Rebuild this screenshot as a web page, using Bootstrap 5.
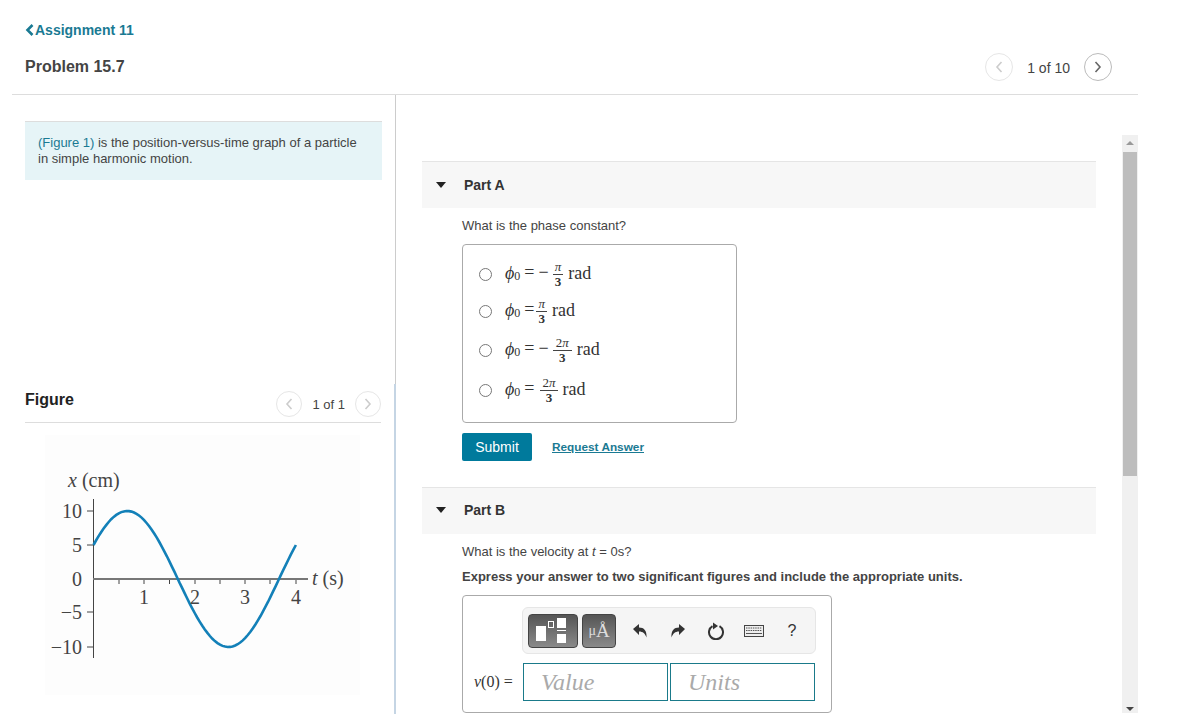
<!DOCTYPE html>
<html lang="en">
<head>
    <meta charset="UTF-8">
    <title>Problem 15.7</title>
    <link rel="stylesheet" href="https://cdn.jsdelivr.net/npm/bootstrap@5.3.0/dist/css/bootstrap.min.css">
    <style>
        html, body { height: 714px; overflow: hidden; }
        body { font-family: "Liberation Sans", Arial, sans-serif; font-size: 13px; color: #444; background: #fff; line-height: 16px; }
        a { color: #1a7a93; }
        .page-wrap { width: 1126px; margin-left: 12px; }
        .top-head { height: 95px; border-bottom: 1px solid #ddd; padding: 22px 26px 0 13px; }
        .back-link { font-size: 14px; font-weight: 700; text-decoration: none; height: 16px; }
        .prob-title { font-size: 16px; font-weight: 700; color: #444; margin: 0; }
        .head-row { margin-top: 15px; }
        .circ-btn { width: 28px; height: 28px; border-radius: 50%; border: 1px solid #bbb; background: #fff; padding: 0; display: flex; align-items: center; justify-content: center; }
        .circ-btn.is-off { border-color: #e6e6e6; }
        .count-txt { font-size: 14px; margin: 1px 14px 0; }
        .main-row { height: 619px; }
        .left-col { width: 384px; flex: none; }
        .intro-part { height: 289px; padding: 26px 13px 0; border-right: 1px solid #ccc; }
        .intro-box { height: 59px; background: #e6f4f7; border-top: 1px solid #ddd; padding: 13px 16px 13px 13px; font-size: 13px; }
        .intro-box a { text-decoration: none; }
        .fig-part { height: 330px; padding: 0 13px; border-right: 2px solid #c5d5e4; }
        .fig-head { height: 39px; border-bottom: 1px solid #ddd; padding-top: 4px; }
        .fig-title { font-size: 16px; font-weight: 700; color: #222; margin: 0 0 10px; }
        .fig-nav { margin-bottom: 2px; }
        .fig-nav .circ-btn { width: 26px; height: 26px; }
        .fig-nav .count-txt { font-size: 13px; margin: 2px 10px 0; }
        .fig-graph { display: block; margin: 12px 0 0 20px; background: #fdfdfd; }
        .right-col { width: 742px; flex: none; padding-left: 26px; }
        .parts-col { width: 674px; flex: none; padding-top: 66px; }
        .part-bar { height: 47px; background: #f7f7f7; border-top: 1px solid #e5e5e5; padding-left: 14px; gap: 18px; font-size: 14px; font-weight: 700; color: #333; }
        .part-gap { margin-top: 26px; padding-bottom: 2px; }
        .part-arrow { width: 0; height: 0; border-left: 5.5px solid transparent; border-right: 5.5px solid transparent; border-top: 6px solid #222; }
        .part-body { padding-left: 40px; }
        .q-line { margin-top: 10px; }
        .hint-line { margin-top: 9px; }
        .opt-box { width: 275px; height: 179px; border: 1px solid #aaa; border-radius: 4px; padding: 10px 16px; margin-top: 10px; }
        .opt-row { height: 38px; gap: 13px; }
        .opt-row:nth-child(2) { height: 36px; }
        .opt-row:nth-child(3) { height: 42px; }
        .opt-row .form-check-input { width: 13px; height: 13px; margin: 0; border: 1px solid #777; flex: none; }
        .math-txt { font-family: "Liberation Serif", serif; font-size: 18px; color: #333; white-space: nowrap; }
        .math-txt sub { font-size: 12px; bottom: -.15em; }
        .math-txt .op { margin: 0 4px; }
        .math-txt .op.op-tight { margin-right: 0; }
        .math-txt .op-minus { margin-right: 2px; }
        .frac-box { display: inline-flex; flex-direction: column; text-align: center; vertical-align: middle; font-size: 13px; line-height: 12px; margin: 0 5px 0 2px; }
        .frac-box > span:first-child { border-bottom: 1px solid #444; padding: 0 2px 1px; }
        .frac-box > span:last-child { font-weight: 700; padding-top: 1px; }
        .frac-box.frac-wide > span:first-child { padding: 0 3px 1px; }
        .act-row { margin-top: 10px; }
        .submit-btn { width: 70px; height: 28px; background: #007a9c; border: 0; border-radius: 2px; color: #fff; font-size: 14px; padding: 0; }
        .req-link { font-size: 11.8px; font-weight: 700; margin-left: 20px; }
        .ans-box { width: 370px; height: 118px; border: 1px solid #aaa; border-radius: 4px; margin-top: 10px; padding: 11px 16px 0 11px; }
        .tool-bar { width: 294px; height: 47px; margin-left: 48px; background: #f5f5f5; border: 1px solid #e6e6e6; border-radius: 6px; padding: 5px; }
        .tool-dark { height: 34px; border: 1px solid #444; border-radius: 4px; background: linear-gradient(#555, #8a8a8a); color: #ddd; padding: 0; display: flex; align-items: center; justify-content: center; font-family: "Liberation Serif", serif; font-size: 14px; flex: none; }
        .tool-dark.tool-tpl { width: 50px; }
        .tool-dark.tool-unit { width: 34px; margin-left: 4px; }
        .tool-dark b { font-weight: 400; font-size: 19px; }
        .tool-ico { width: 38px; height: 34px; display: flex; align-items: center; justify-content: center; font-size: 16px; color: #333; flex: none; }
        .tool-first { margin-left: 5px; }
        .ans-row { margin-top: 9px; }
        .ans-label { width: 49px; font-family: "Liberation Serif", serif; font-size: 16px; color: #333; flex: none; }
        .ans-input { width: 145px; height: 38px; border: 1px solid #1a7a8a; border-radius: 0; padding: 0 17px; font-family: "Liberation Serif", serif; font-style: italic; font-size: 24px; flex: none; }
        .ans-input::placeholder { color: #aaa; opacity: 1; }
        .scroll-rail { width: 16px; height: 578px; margin: 40px 0 0 26px; background: #f0f0f0; flex: none; position: relative; }
        .scroll-thumb { width: 14px; height: 324px; margin-left: 1px; background: #bdbdbd; position: relative; top: 17px; }
        .rail-up, .rail-down { position: absolute; left: 4px; width: 0; height: 0; border-left: 4px solid transparent; border-right: 4px solid transparent; }
        .rail-up { top: 6px; border-bottom: 4px solid #999; }
        .rail-down { bottom: 2px; border-top: 4px solid #444; }
    </style>
</head>
<body>
    <div class="page-wrap">
        <div class="top-head">
            <a href="#" class="back-link d-flex align-items-center">
                <svg width="10" height="12" viewBox="0 0 10 12"><path d="M7.500 1 2.500 6l5 5" fill="none" stroke="#1a7a93" stroke-width="2.600"/></svg>Assignment 11
            </a>
            <div class="head-row d-flex justify-content-between align-items-center">
                <h1 class="prob-title">Problem 15.7</h1>
                <div class="d-flex align-items-center">
                    <button class="circ-btn is-off"><svg width="10" height="14" viewBox="0 0 10 14"><path d="M7.500 2 3 7l4.500 5" fill="none" stroke="#ccc" stroke-width="1.600"/></svg></button>
                    <span class="count-txt">1 of 10</span>
                    <button class="circ-btn"><svg width="10" height="14" viewBox="0 0 10 14"><path d="M2.500 2 7 7l-4.500 5" fill="none" stroke="#666" stroke-width="1.600"/></svg></button>
                </div>
            </div>
        </div>
        <div class="main-row d-flex">
            <div class="left-col">
                <div class="intro-part">
                    <div class="intro-box"><a href="#">(Figure 1)</a> is the position-versus-time graph of a particle in simple harmonic motion.</div>
                </div>
                <div class="fig-part">
                    <div class="fig-head d-flex justify-content-between align-items-center">
                        <h2 class="fig-title">Figure</h2>
                        <div class="fig-nav d-flex align-items-center">
                            <button class="circ-btn is-off"><svg width="10" height="14" viewBox="0 0 10 14"><path d="M7.500 2 3 7l4.500 5" fill="none" stroke="#ccc" stroke-width="1.600"/></svg></button>
                            <span class="count-txt">1 of 1</span>
                            <button class="circ-btn is-off"><svg width="10" height="14" viewBox="0 0 10 14"><path d="M2.500 2 7 7l-4.500 5" fill="none" stroke="#ccc" stroke-width="1.600"/></svg></button>
                        </div>
                    </div>
                    <svg class="fig-graph" width="315" height="260" viewBox="45 435 315 260" font-family="Liberation Serif, serif" font-size="20" fill="#444">
                        <g stroke="#444" stroke-width="1" fill="none">
                            <path d="M93.500 499V658"/>
                            <path d="M87 511h6M87 545h6M87 612h6M87 647h6"/>
                            <path d="M119 579v5M144 579v5M169.500 579v5M195 579v5M220 579v5M245 579v5M270 579v5M296 579v5"/>
                        </g>
                        <path d="M93 579H308" stroke="#777" stroke-width="2"/>
                        <path id="curve" fill="none" stroke="#1380b8" stroke-width="2.600"/>
                        <text x="68" y="487"><tspan font-style="italic">x</tspan> (cm)</text>
                        <g text-anchor="end">
                            <text x="82" y="518">10</text>
                            <text x="82" y="552">5</text>
                            <text x="82" y="586">0</text>
                            <text x="82" y="619">−5</text>
                            <text x="82" y="654">−10</text>
                        </g>
                        <g text-anchor="middle">
                            <text x="144" y="604">1</text>
                            <text x="195" y="604">2</text>
                            <text x="245" y="604">3</text>
                            <text x="296" y="604">4</text>
                        </g>
                        <text x="312" y="585"><tspan font-style="italic">t</tspan> (s)</text>
                    </svg>
                </div>
            </div>
            <div class="right-col d-flex">
                <div class="parts-col">
                    <div class="part-bar d-flex align-items-center"><span class="part-arrow"></span>Part A</div>
                    <div class="part-body">
                        <div class="q-line">What is the phase constant?</div>
                        <div class="opt-box">
                            <label class="opt-row d-flex align-items-center">
                                <input class="form-check-input" type="radio" name="phase">
                                <span class="math-txt"><i>ϕ</i><sub>0</sub><span class="op">=</span><span class="op-minus">−</span><span class="frac-box"><span><i>π</i></span><span>3</span></span>rad</span>
                            </label>
                            <label class="opt-row d-flex align-items-center">
                                <input class="form-check-input" type="radio" name="phase">
                                <span class="math-txt"><i>ϕ</i><sub>0</sub><span class="op op-tight">=</span><span class="frac-box"><span><i>π</i></span><span>3</span></span>rad</span>
                            </label>
                            <label class="opt-row d-flex align-items-center">
                                <input class="form-check-input" type="radio" name="phase">
                                <span class="math-txt"><i>ϕ</i><sub>0</sub><span class="op">=</span><span class="op-minus">−</span><span class="frac-box frac-wide"><span>2<i>π</i></span><span>3</span></span>rad</span>
                            </label>
                            <label class="opt-row d-flex align-items-center">
                                <input class="form-check-input" type="radio" name="phase">
                                <span class="math-txt"><i>ϕ</i><sub>0</sub><span class="op">=</span><span class="frac-box"><span>2<i>π</i></span><span>3</span></span>rad</span>
                            </label>
                        </div>
                        <div class="act-row d-flex align-items-center">
                            <button class="btn submit-btn">Submit</button>
                            <a href="#" class="req-link">Request Answer</a>
                        </div>
                    </div>
                    <div class="part-bar part-gap d-flex align-items-center"><span class="part-arrow"></span>Part B</div>
                    <div class="part-body">
                        <div class="q-line">What is the velocity at <i>t</i> = 0s?</div>
                        <div class="hint-line fw-bold">Express your answer to two significant figures and include the appropriate units.</div>
                        <div class="ans-box">
                            <div class="tool-bar d-flex align-items-center">
                                <button class="tool-dark tool-tpl">
                                    <svg width="48" height="32" viewBox="0 0 48 32" fill="#fff"><rect x="7" y="11" width="10" height="15"/><rect x="19.500" y="6.500" width="5" height="6" fill="none" stroke="#fff"/><rect x="28" y="3" width="9" height="10"/><rect x="28" y="15" width="9" height="1"/><rect x="28" y="19" width="9" height="9"/></svg>
                                </button>
                                <button class="tool-dark tool-unit">μ<b>Å</b></button>
                                <span class="tool-ico tool-first"><svg width="16" height="16" viewBox="0 0 16 16"><path d="M1 6 7 1v3.500c5 0 8 3 7.500 10C13 10.500 11 8.500 7 8.500V12z" fill="#333"/></svg></span>
                                <span class="tool-ico"><svg width="16" height="16" viewBox="0 0 16 16"><path d="M15 6 9 1v3.500c-5 0-8 3-7.500 10C3 10.500 5 8.500 9 8.500V12z" fill="#333"/></svg></span>
                                <span class="tool-ico"><svg width="18" height="18" viewBox="0 0 18 18"><path d="M5.500 4.200a7 7 0 1 0 7 0" fill="none" stroke="#333" stroke-width="2"/><path d="M6 .5 11 4 6 7.500z" fill="#333"/></svg></span>
                                <span class="tool-ico"><svg width="20" height="12" viewBox="0 0 20 12"><rect x=".5" y=".5" width="19" height="11" fill="#eee" stroke="#444"/><path d="M2 3h16M2 5.500h16" stroke="#555" stroke-dasharray="1.500 .8"/><path d="M2 8.500h16" stroke="#555"/></svg></span>
                                <span class="tool-ico">?</span>
                            </div>
                            <div class="ans-row d-flex align-items-center">
                                <span class="ans-label"><i>v</i>(0) =</span>
                                <input class="ans-input form-control" placeholder="Value">
                                <input class="ans-input form-control ms-auto" placeholder="Units">
                            </div>
                        </div>
                    </div>
                </div>
                <div class="scroll-rail">
                    <div class="rail-up"></div>
                    <div class="scroll-thumb"></div>
                    <div class="rail-down"></div>
                </div>
            </div>
        </div>
    </div>
    <script src="https://cdn.jsdelivr.net/npm/bootstrap@5.3.0/dist/js/bootstrap.bundle.min.js"></script>
    <script>
        // x(t) = 10 sin(pi t / 2 + pi / 6), scaled to the graph's pixel axes
        let d = '';
        for (let t = 0; t <= 4.001; t += 0.05) {
            const px = 93.5 + 50.6 * t;
            const py = 579 - 6.8 * 10 * Math.sin(Math.PI * t / 2 + Math.PI / 6);
            d += (d ? 'L' : 'M') + px.toFixed(1) + ' ' + py.toFixed(1);
        }
        document.getElementById('curve').setAttribute('d', d);
    </script>
</body>
</html>
